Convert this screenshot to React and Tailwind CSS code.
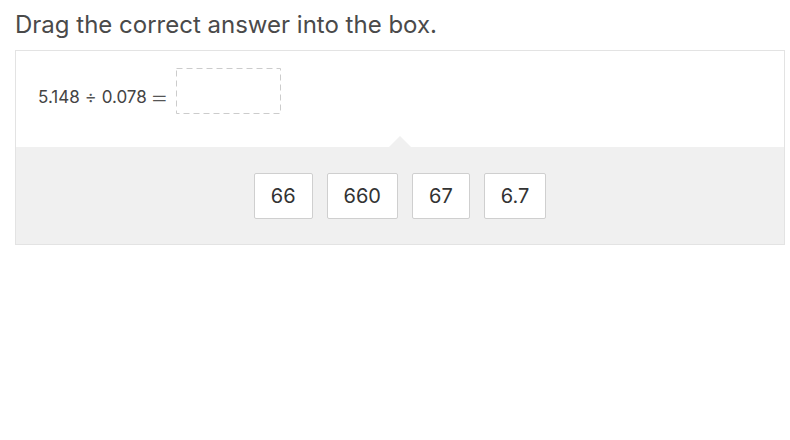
import React from 'react';

const choices = ['66', '660', '67', '6.7'];

export default function App() {
  return (
    <div className="w-[790px] h-[440px] bg-white font-['Inter',sans-serif] text-[#444]">
      <div className="pl-[15px] pt-[9px]">
        <h1 className="text-[24px] leading-[32px] text-[#4a4a4a] mb-[9px]">
          Drag the correct answer into the box.
        </h1>

        <div className="w-[770px] border border-[#e3e3e3]">
          {/* Question area */}
          <div className="relative bg-white pl-[22px] pt-[17px] pb-[33px] flex items-center">
            <div className="flex items-center mt-[12px] mr-[10px] text-[17px] leading-[20px] text-[#444]">
              <span>5.148</span>
              <span className="mx-[5px] text-[18px] text-[#555]">÷</span>
              <span>0.078</span>
              <span className="ml-[5px] inline-block w-[14px] text-center text-[22px] font-light leading-[20px] scale-x-[1.4] text-[#555]">=</span>
            </div>
            <div className="relative w-[105px] h-[46px]">
              <svg className="absolute inset-0" width="105" height="46">
                <rect x="0.5" y="0.5" width="104" height="45" fill="none" stroke="#cccccc" strokeWidth="1" strokeDasharray="6 4" />
              </svg>
            </div>
            <div className="absolute left-1/2 -translate-x-1/2 bottom-0 w-0 h-0 border-l-[11px] border-r-[11px] border-b-[11px] border-l-transparent border-r-transparent border-b-[#f0f0f0]"></div>
          </div>

          {/* Choices */}
          <div className="bg-[#f0f0f0] pt-[26px] pb-[25px] flex justify-center gap-[14px]">
            {choices.map((c) => (
              <div
                key={c}
                className="h-[46px] px-[16px] bg-white border border-[#cfcfcf] rounded-[2px] flex items-center justify-center text-[20px] text-[#333]"
              >
                {c}
              </div>
            ))}
          </div>
        </div>
      </div>
    </div>
  );
}
